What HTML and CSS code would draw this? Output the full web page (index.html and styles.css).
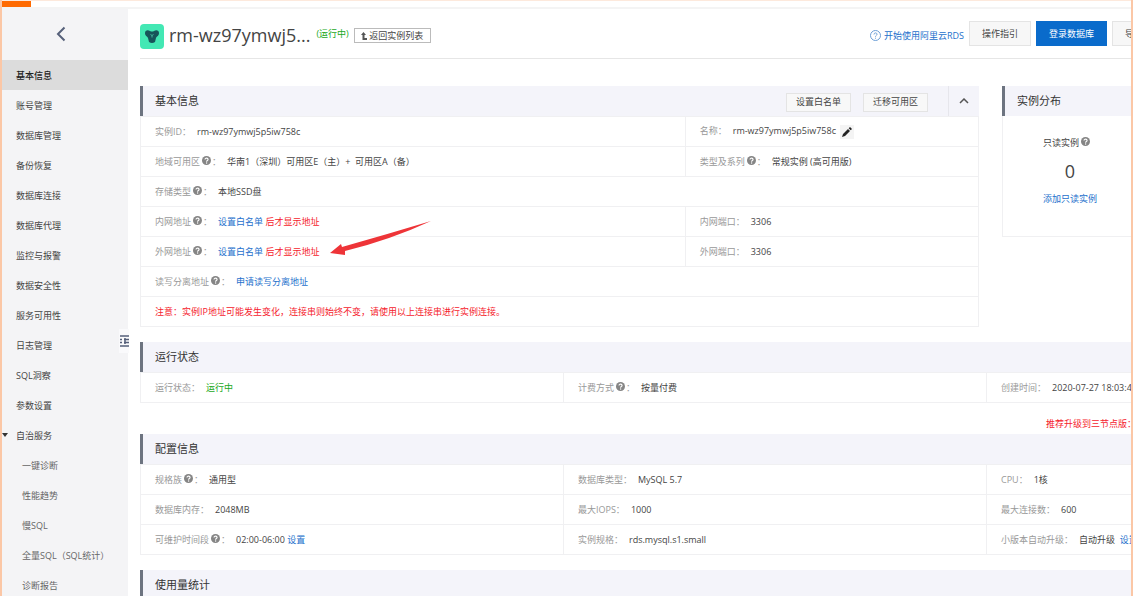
FILE: index.html
```html
<!DOCTYPE html>
<html lang="zh-CN">
<head>
<meta charset="utf-8">
<title>RDS 基本信息</title>
<link rel="stylesheet" href="styles.css">
</head>
<body>
<svg class="defs" aria-hidden="true">
  <symbol id="help" viewBox="0 0 16 16"><circle cx="8" cy="8" r="8" fill="#858585"/><path d="M5.4 6.2C5.4 2.8 10.8 3 10.8 6.1C10.8 8 8.2 8 8.2 10" fill="none" stroke="#fff" stroke-width="2"/><circle cx="8.2" cy="12.4" r="1.2" fill="#fff"/></symbol>
</svg>
<div class="topbar"><span class="brand"></span></div>
<div class="layout">
  <nav class="sidebar">
    <button class="back" aria-label="返回"><svg width="10" height="16" viewBox="0 0 10 16"><path d="M8.500 1.500L2 8l6.500 6.500" fill="none" stroke="#56607a" stroke-width="2"/></svg></button>
    <a class="item active" href="#">基本信息</a>
    <a class="item" href="#">账号管理</a>
    <a class="item" href="#">数据库管理</a>
    <a class="item" href="#">备份恢复</a>
    <a class="item" href="#">数据库连接</a>
    <a class="item" href="#">数据库代理</a>
    <a class="item" href="#">监控与报警</a>
    <a class="item" href="#">数据安全性</a>
    <a class="item" href="#">服务可用性</a>
    <a class="item" href="#">日志管理</a>
    <a class="item" href="#">SQL洞察</a>
    <a class="item" href="#">参数设置</a>
    <a class="item parent" href="#">自治服务</a>
    <a class="item sub" href="#">一键诊断</a>
    <a class="item sub" href="#">性能趋势</a>
    <a class="item sub" href="#">慢SQL</a>
    <a class="item sub" href="#">全量SQL（SQL统计）</a>
    <a class="item sub" href="#">诊断报告</a>
    <button class="fold" aria-label="收起菜单"><svg width="9" height="12" viewBox="0 0 9 12"><path d="M0 1h9M0 11h9M0 4.500h2M0 7.500h2M4 4.500h5M4 7.500h5M5 3v6" stroke="#56607a" stroke-width="1.500"/></svg></button>
  </nav>
  <main class="main">
    <header class="header">
      <svg class="logo" width="24" height="25" viewBox="0 0 24 25"><rect width="24" height="25" rx="4" fill="#43e8b4"/><path d="M5 9C5 6 8 5.500 10 7Q12 8 14 7C16 5.500 19 6 19 9C19 12 17 12 16 14L15 18Q12 20 9 18L8 14C7 12 5 12 5 9Z" fill="#17545a"/><path d="M10.500 10.500l1.500 1 1.500-1M12 11.500v2" fill="none" stroke="#43b79c"/></svg>
      <h1 class="title">rm-wz97ymwj5...</h1>
      <span class="state">(运行中)</span>
      <button class="return"><svg width="6" height="8" viewBox="0 0 6 8"><path d="M0 3l2.500-3L5 3H3.500v3H6v2H1.500V3z" fill="#555"/></svg>返回实例列表</button>
      <div class="actions">
        <a class="guide" href="#"><svg width="11" height="11" viewBox="0 0 11 11"><circle cx="5.500" cy="5.500" r="5" fill="none" stroke="#6c9fd6"/><path d="M4 4.500C4 2.300 7 2.500 7 4.300C7 5.400 5.500 5.400 5.500 6.700M5.500 7.700v1" fill="none" stroke="#6c9fd6"/></svg>开始使用阿里云RDS</a>
        <button class="btn">操作指引</button>
        <button class="btn primary">登录数据库</button>
        <button class="btn">导入数据</button>
      </div>
    </header>
    <div class="content">
      <div class="columns">
        <section class="panel">
          <div class="bar">
            <h2>基本信息</h2>
            <button class="small-btn">设置白名单</button>
            <button class="small-btn">迁移可用区</button>
            <button class="toggle" aria-label="收起"><svg width="10" height="6" viewBox="0 0 10 6"><path d="M1 5l4-4 4 4" fill="none" stroke="#555" stroke-width="1.500"/></svg></button>
          </div>
          <table class="info basic">
            <tr><td><span class="label">实例ID：</span>rm-wz97ymwj5p5iw758c</td><td><span class="label">名称：</span>rm-wz97ymwj5p5iw758c<button class="edit" aria-label="编辑"><svg width="10" height="10" viewBox="0 0 10 10"><path d="M0 10l1-3 5-5 2 2-5 5zM6.700 1.300L8 0l2 2-1.300 1.300z" fill="#222"/></svg></button></td></tr>
            <tr><td><span class="label">地域可用区<svg class="help"><use href="#help"/></svg>：</span>华南1（深圳）可用区E（主）+ &nbsp;可用区A（备）</td><td><span class="label">类型及系列<svg class="help"><use href="#help"/></svg>：</span>常规实例 (高可用版)</td></tr>
            <tr><td colspan="2"><span class="label">存储类型<svg class="help"><use href="#help"/></svg>：</span>本地SSD盘</td></tr>
            <tr><td><span class="label">内网地址<svg class="help"><use href="#help"/></svg>：</span><a href="#">设置白名单</a> <span class="red">后才显示地址</span></td><td><span class="label">内网端口：</span>3306</td></tr>
            <tr><td class="marked"><span class="label">外网地址<svg class="help"><use href="#help"/></svg>：</span><a href="#">设置白名单</a> <span class="red">后才显示地址</span><svg class="arrow" width="102" height="36" viewBox="0 0 102 36"><path d="M0 33L11 24L12 27Q58 14 101 1Q60 20 15 31L15 35Z" fill="#ee3438"/></svg></td><td><span class="label">外网端口：</span>3306</td></tr>
            <tr><td colspan="2"><span class="label">读写分离地址<svg class="help"><use href="#help"/></svg>：</span><a href="#">申请读写分离地址</a></td></tr>
            <tr><td colspan="2" class="red">注意：实例IP地址可能发生变化，连接串则始终不变，请使用以上连接串进行实例连接。</td></tr>
          </table>
        </section>
        <section class="panel distribution">
          <div class="bar"><h2>实例分布</h2></div>
          <div class="readonly">
            <span class="readonly-name">只读实例<svg class="help"><use href="#help"/></svg></span>
            <span class="count">0</span>
            <a href="#">添加只读实例</a>
          </div>
        </section>
      </div>
      <section class="panel">
        <div class="bar"><h2>运行状态</h2></div>
        <table class="info thirds">
          <tr><td><span class="label">运行状态：</span><span class="green">运行中</span></td><td><span class="label">计费方式<svg class="help"><use href="#help"/></svg>：</span>按量付费</td><td><span class="label">创建时间：</span>2020-07-27 18:03:4</td></tr>
        </table>
      </section>
      <p class="upgrade red">推荐升级到三节点版：</p>
      <section class="panel">
        <div class="bar"><h2>配置信息</h2></div>
        <table class="info thirds">
          <tr><td><span class="label">规格族<svg class="help"><use href="#help"/></svg>：</span>通用型</td><td><span class="label">数据库类型：</span>MySQL 5.7</td><td><span class="label">CPU：</span>1核</td></tr>
          <tr><td><span class="label">数据库内存：</span>2048MB</td><td><span class="label">最大IOPS：</span>1000</td><td><span class="label">最大连接数：</span>600</td></tr>
          <tr><td><span class="label">可维护时间段<svg class="help"><use href="#help"/></svg>：</span>02:00-06:00 <a href="#">设置</a></td><td><span class="label">实例规格：</span>rds.mysql.s1.small</td><td><span class="label">小版本自动升级：</span>自动升级 &nbsp;<a href="#">设置</a></td></tr>
        </table>
      </section>
      <section class="panel">
        <div class="bar"><h2>使用量统计</h2></div>
      </section>
    </div>
  </main>
</div>
</body>
</html>
```
FILE: styles.css
```css
* { box-sizing: border-box; }
body {
  margin: 0;
  height: 100vh;
  overflow: hidden;
  display: flex;
  flex-direction: column;
  border: solid #fbc7a6;
  border-width: 0 2px;
  background: #fff;
  color: #444;
  font: 9px/14px "Open Sans", "Noto Sans CJK SC", sans-serif;
}
button { font: inherit; color: inherit; padding: 0; border: 0; background: none; }
a { color: #2470cc; text-decoration: none; }
.defs { position: absolute; width: 0; height: 0; }
.red { color: #f5222d; }
.green { color: #1ca81c; }

.topbar { flex: none; height: 9px; border-top: 1px solid #fde9dc; border-bottom: 2px solid #f4f4f4; }
.brand { display: block; width: 29px; height: 6px; background: #ff6a00; }
.layout { display: flex; flex: 1; min-height: 0; }

.sidebar { position: relative; flex: none; display: flex; flex-direction: column; width: 126px; background: #f4f4f6; }
.back { flex: none; height: 51px; padding-bottom: 2px; padding-right: 8px; }
.back svg { vertical-align: middle; }
.item { flex: none; height: 30px; padding-left: 14px; line-height: 32px; color: #444; }
.item.active { background: #dcdcdc; color: #222; font-weight: 500; }
.item.sub { padding-left: 20px; color: #666; }
.item.parent::before { content: ""; float: left; margin: 13px 0 0 -14px; border: solid transparent; border-width: 4px 3px 0; border-top-color: #333; }
.fold { position: absolute; right: -1px; top: 320px; width: 10px; height: 24px; background: #fafafc; }
.fold svg { display: block; margin: auto; }

.main { flex: 1; min-width: 0; padding-left: 12px; overflow: hidden; }
.header { display: flex; align-items: center; height: 50px; margin-bottom: 27px; border-bottom: 1px solid #e6e6e6; }
.logo { flex: none; margin-top: 6px; }
.title { margin: 2px 6px 0 5px; font-size: 18px; line-height: 24px; font-weight: 400; color: #444; }
.state { color: #1ca81c; }
.return { display: flex; align-items: center; justify-content: center; gap: 2px; width: 77px; height: 15px; margin: 4px 0 0 5px; border: 1px solid #bbb; }
.actions { display: flex; align-items: center; gap: 5px; margin: 0 -43px 0 auto; }
.guide { display: flex; align-items: center; gap: 3px; margin-top: 4px; }
.btn { height: 25px; width: 62px; border: 1px solid #e4e4e4; background: #f7f7f7; }
.btn.primary { width: 71px; border-color: #0a6bcb; background: #0a6bcb; color: #fff; }

.content { min-width: 1270px; display: flex; flex-direction: column; gap: 15px; }
.columns { display: grid; grid-template-columns: 839fr 408fr; gap: 23px; align-items: start; }
.bar { display: flex; align-items: center; height: 30px; padding-left: 12px; border-left: 3px solid #6d7480; background: #f4f4fa; }
.bar h2 { flex: 1; margin: 0; font-size: 11px; line-height: 14px; font-weight: 400; color: #333; }
.small-btn { width: 65px; height: 19px; margin: 2px 12px 0 0; border: 1px solid #e4e4e4; background: #f8f8f8; }
.toggle { width: 31px; height: 30px; margin-left: 8px; border-left: 1px solid #e6e6ec; }
.info { width: 100%; table-layout: fixed; border-collapse: collapse; }
.info td { height: 30px; padding: 0 0 0 14px; border: 1px solid #f0f0f2; white-space: nowrap; }
.basic tr td:first-child { width: 65%; }
.label { margin-right: 6px; color: #999; }
.help { width: 9px; height: 9px; margin: 0 1px 0 2px; vertical-align: 0; }
.edit { width: 14px; height: 14px; margin-left: 4px; background: #f4f4f4; vertical-align: middle; }
.edit svg { display: block; margin: auto; }
.marked { position: relative; }
.arrow { position: absolute; left: 189px; top: -17px; }
.distribution { border: 1px solid #f0f0f2; border-top: 0; border-left: 0; }
.readonly { display: flex; flex-direction: column; align-items: flex-start; height: 120px; padding: 20px 0 0 40px; border-left: 1px solid #f0f0f2; }
.count { width: 54px; margin: 9px 0; text-align: center; font-size: 18px; line-height: 24px; }
.upgrade { height: 16px; margin: -2px 274px -13px 0; line-height: 16px; text-align: right; }
```
